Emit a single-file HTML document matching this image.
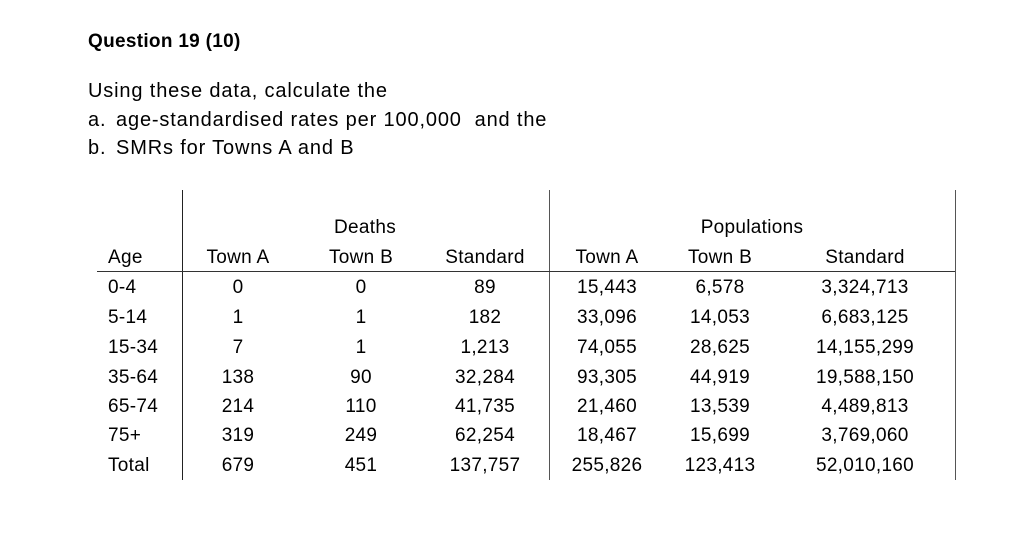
<!DOCTYPE html><html><head><style>
body{margin:0;width:1024px;height:541px;background:#fff;position:relative;font-family:"Liberation Sans",sans-serif;color:#000;overflow:hidden}
.t{position:absolute;font-size:19px;white-space:nowrap;line-height:20px;letter-spacing:0.3px}
.c{transform:translateX(-50%)}
.v{position:absolute;width:1px;top:190px;height:290px;background:#222}
.p{font-size:20px;letter-spacing:0.85px}
</style></head><body>
<div class="t" style="left:88px;top:32px;font-weight:bold;font-size:19px;letter-spacing:0.3px">Question 19 (10)</div>
<div class="t p" style="left:88px;top:81px">Using these data, calculate the</div>
<div class="t p" style="left:88px;top:110px">a.</div><div class="t p" style="left:116px;top:110px">age-standardised rates per 100,000&nbsp; and the</div>
<div class="t p" style="left:88px;top:138px">b.</div><div class="t p" style="left:116px;top:138px">SMRs for Towns A and B</div>
<div class="v" style="left:182px"></div>
<div class="v" style="left:549px;background:#555"></div>
<div class="v" style="left:955px;background:#555"></div>
<div style="position:absolute;left:97px;top:271px;width:858px;height:1px;background:#333"></div>
<div id="tbl"></div>
<script>
var rows=[["Age","Town A","Town B","Standard","Town A","Town B","Standard"],
["0-4","0","0","89","15,443","6,578","3,324,713"],
["5-14","1","1","182","33,096","14,053","6,683,125"],
["15-34","7","1","1,213","74,055","28,625","14,155,299"],
["35-64","138","90","32,284","93,305","44,919","19,588,150"],
["65-74","214","110","41,735","21,460","13,539","4,489,813"],
["75+","319","249","62,254","18,467","15,699","3,769,060"],
["Total","679","451","137,757","255,826","123,413","52,010,160"]];
var ys=[248,278,308,338,368,397,426,456],xs=[0,238,361,485,607,720,865],h="";
h+='<div class="t c" style="left:365px;top:218px">Deaths</div><div class="t c" style="left:752px;top:218px">Populations</div>';
rows.forEach(function(r,i){r.forEach(function(s,j){h+=j==0?'<div class="t" style="left:108px;top:'+ys[i]+'px">'+s+'</div>':'<div class="t c" style="left:'+xs[j]+'px;top:'+ys[i]+'px">'+s+'</div>';});});
document.getElementById("tbl").innerHTML=h;
</script>
</body></html>
